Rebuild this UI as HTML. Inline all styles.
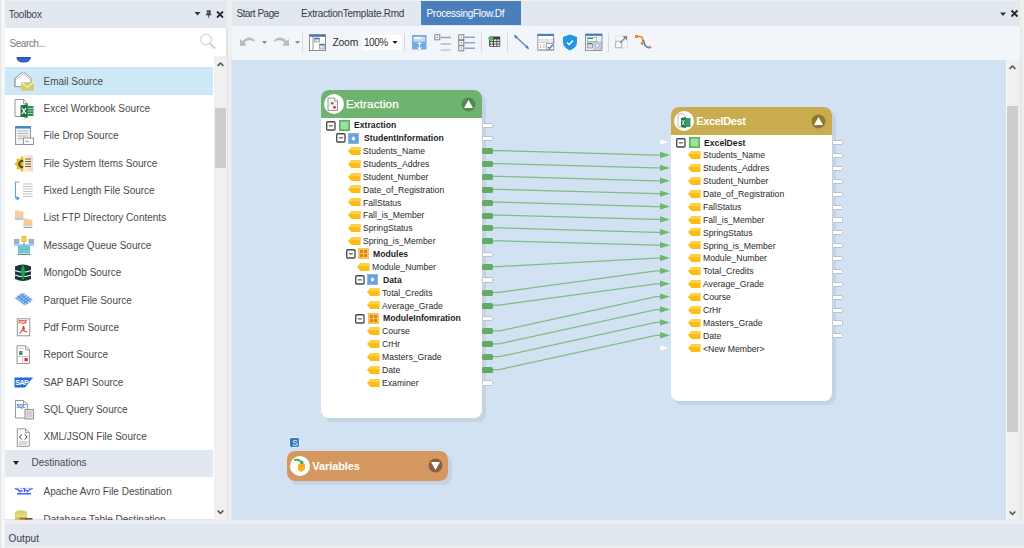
<!DOCTYPE html>
<html><head><meta charset="utf-8"><style>
*{margin:0;padding:0;box-sizing:border-box}
html,body{width:1024px;height:548px;overflow:hidden;background:#efefef;font-family:"Liberation Sans",sans-serif;position:relative}
.abs{position:absolute}
.t{position:absolute;white-space:nowrap;line-height:1}
.item{position:absolute;left:43.5px;font-size:10px;color:#4a4a4a;white-space:nowrap;line-height:1}
.ic{position:absolute;left:13.5px;width:20px;height:20px}
.row{position:absolute;font-size:9.5px;color:#2a2a2a;white-space:nowrap;line-height:1;transform:scaleX(0.91);transform-origin:0 50%}
.b{font-weight:bold;color:#1e1e1e}
</style></head><body>

<div class="abs" style="left:0;top:0;width:5px;height:548px;background:#f3f6f9;border-left:1.5px solid #e3e3e3"></div>
<div class="abs" style="left:5px;top:1px;width:222px;height:519px;background:#fff;border-right:1px solid #dde3ea;border-bottom:1px solid #e2e6ea"></div>
<div class="abs" style="left:5px;top:1px;width:221.5px;height:26.5px;background:#e1e8f0"></div>
<div class="t" style="left:8.7px;top:9.7px;font-size:10px;color:#3e3e3e;letter-spacing:-0.2px">Toolbox</div>
<svg class="abs" style="left:190px;top:6px" width="37" height="16" viewBox="0 0 37 16">
<path d="M4.5 6 L10.5 6 L7.5 9.5 Z" fill="#333"/>
<path d="M16.8 4.2 h3.8 v4 h0.8 v1 h-2.3 v2.5 h-0.9 v-2.5 h-2.3 v-1 h0.9 z" fill="#3a3a3a"/><rect x="17.6" y="4.8" width="1" height="3.2" fill="#999"/>
<path d="M27 5.5 L33 11.5 M33 5.5 L27 11.5" stroke="#2b2b2b" stroke-width="1.8"/>
</svg>
<div class="t" style="left:9.5px;top:39.3px;font-size:10px;color:#7b7b7b;letter-spacing:-0.45px">Search...</div>
<svg class="abs" style="left:198px;top:32px" width="20" height="18" viewBox="0 0 20 18">
<circle cx="8" cy="7.5" r="5.2" fill="none" stroke="#dcdcdc" stroke-width="1.5"/>
<path d="M12 11.5 L16.5 16" stroke="#d6d6d6" stroke-width="2.4" stroke-linecap="round"/>
</svg>
<div class="abs" style="left:5px;top:55px;width:209px;height:464px;overflow:hidden">
<svg class="abs" style="left:10.5px;top:0.5px" width="16" height="8" viewBox="0 0 16 8"><path d="M0.3 1 H15 Q14.5 6.5 7.6 6.5 Q0.8 6.5 0.3 1 Z" fill="#2d56b8"/><path d="M3 3.5 Q7.6 5 12 3.5" stroke="#3f7ad8" stroke-width="1.2" fill="none"/></svg>
<div class="abs" style="left:0;top:12.3px;width:208px;height:27.6px;background:#cde8f7"></div>
<div class="abs" style="left:0;top:394.8px;width:208px;height:27.6px;background:#e1e8f0"></div>
</div>
<div class="item" style="top:76.60px">Email Source</div>
<svg class="ic" style="top:71.70px" width="20" height="20" viewBox="0 0 20 20"><g transform="translate(0,-1.3)"><path d="M1 7.5 L9 1 L17 7.5 V16 H1 Z" fill="#fff" stroke="#8a8a8a" stroke-width="0.9"/><path d="M0.6 8 V16.5" stroke="#a9a9a9" stroke-width="1.6"/><path d="M2.5 8.5 L9 3.3 L15.5 8.5" fill="none" stroke="#b5b5b5" stroke-width="0.8"/><rect x="7" y="11.5" width="13" height="8.5" fill="#d3cd6e"/><path d="M7 11.5 L13.5 16.5 L20 11.5" fill="none" stroke="#f6f1c8" stroke-width="1.1"/></g></svg>
<div class="item" style="top:103.97px">Excel Workbook Source</div>
<svg class="ic" style="top:99.07px" width="20" height="20" viewBox="0 0 20 20"><path d="M1 0.5 H9.5 L13.5 4.5 V17.5 H1 Z" fill="#fff" stroke="#8a8a8a" stroke-width="0.9"/><path d="M9.5 0.5 V4.5 H13.5" fill="none" stroke="#8a8a8a" stroke-width="0.8"/><path d="M6.5 6.5 L13.5 5 V19 L6.5 17.5 Z" fill="#1f7244"/><rect x="13" y="7" width="6.5" height="10" fill="#2f8c57"/><path d="M8 9 L12 15 M12 9 L8 15" stroke="#fff" stroke-width="1.3"/><path d="M14 9.5 h5 M14 12 h5 M14 14.5 h5" stroke="#bfe0cc" stroke-width="0.8"/></svg>
<div class="item" style="top:131.34px">File Drop Source</div>
<svg class="ic" style="top:126.44px" width="20" height="20" viewBox="0 0 20 20"><rect x="1.5" y="0.5" width="15" height="18" fill="#f2f2f2" stroke="#8a8a8a" stroke-width="0.9"/><rect x="1.5" y="0.3" width="15" height="2.2" fill="#3a86d0"/><path d="M3.5 5 h11 M3.5 7.5 h11 M3.5 10 h11 M3.5 12.5 h6" stroke="#b5b5b5" stroke-width="1"/><rect x="9.5" y="12" width="10" height="6.5" fill="#fff" stroke="#8a8a8a" stroke-width="0.9"/><path d="M11.5 15.3 h3" stroke="#8a8a8a" stroke-width="1"/></svg>
<div class="item" style="top:158.71px">File System Items Source</div>
<svg class="ic" style="top:153.81px" width="20" height="20" viewBox="0 0 20 20"><circle cx="8" cy="10" r="6" fill="#f2b91c"/><path d="M8 2.5 v2 M8 15.5 v2 M0.8 10 h2 M3 5 l1.4 1.4 M3 15 l1.4 -1.4" stroke="#f2b91c" stroke-width="2.2"/><path d="M10 7.5 A3 3 0 1 0 10 12.5" fill="none" stroke="#4a4a4a" stroke-width="2"/><rect x="9.5" y="1.5" width="9.5" height="16" fill="#f7dcc0"/><rect x="9.5" y="1.5" width="4" height="16" fill="#fbf2c0"/><path d="M11 5 h6 M11 7.5 h6 M11 10 h6 M11 12.5 h6" stroke="#6d6d6d" stroke-width="1"/></svg>
<div class="item" style="top:186.08px">Fixed Length File Source</div>
<svg class="ic" style="top:181.18px" width="20" height="20" viewBox="0 0 20 20"><path d="M5.5 1 H1.5 V17 H3.5" fill="none" stroke="#5aa2e2" stroke-width="1.1"/><path d="M2.5 15 L6 17.2 L2.5 19.5 Z" fill="#4596e0"/><path d="M9 3 h9.5 M9 5.5 h9.5 M9 8 h9.5 M9 10.5 h9.5 M9 13 h9.5 M9 15.5 h9.5" stroke="#c2c2c2" stroke-width="1.1"/></svg>
<div class="item" style="top:213.45px">List FTP Directory Contents</div>
<svg class="ic" style="top:208.55px" width="20" height="20" viewBox="0 0 20 20"><path d="M1 1.5 h4 l1 1 h3.5 v6.5 h-8.5 z" fill="#fcc99a"/><path d="M1 10 h8.5" stroke="#4a9ee0" stroke-width="1"/><path d="M9.5 9.5 h4 l1 1 h3.8 v6.5 h-8.8 z" fill="#fcc99a"/><path d="M9.5 18.3 h8.8" stroke="#4a9ee0" stroke-width="1"/></svg>
<div class="item" style="top:240.82px">Message Queue Source</div>
<svg class="ic" style="top:235.92px" width="20" height="20" viewBox="0 0 20 20"><rect x="0" y="3.5" width="5" height="4" fill="#9ab5d0" stroke="#6f8fb0" stroke-width="0.5"/><rect x="15" y="3.5" width="5" height="4" fill="#9ab5d0" stroke="#6f8fb0" stroke-width="0.5"/><rect x="7.5" y="0" width="5" height="6" fill="#f6b820"/><path d="M8.5 2 h3 M8.5 4 h3" stroke="#fff" stroke-width="0.6"/><path d="M0 9 H20 M10 6 V10" stroke="#4a9ee0" stroke-width="1"/><rect x="4.5" y="10.5" width="11" height="6.5" fill="#6ccfe0" stroke="#4a9ee0" stroke-width="0.7"/><path d="M6 13.5 h8" stroke="#6bc06b" stroke-width="1.5"/><path d="M3.5 18.5 h13" stroke="#777" stroke-width="1"/></svg>
<div class="item" style="top:268.19px">MongoDb Source</div>
<svg class="ic" style="top:263.29px" width="20" height="20" viewBox="0 0 20 20"><path d="M1 3.5 Q9 -0.5 17 3.5 V16 Q9 20 1 16 Z" fill="#1b3833"/><path d="M1 7.5 Q9 11 17 7.5 M1 12 Q9 15.5 17 12" stroke="#fff" stroke-width="1.1" fill="none"/><path d="M9 1.5 Q13 8 9 18 Q5 8 9 1.5" fill="#13aa52"/></svg>
<div class="item" style="top:295.56px">Parquet File Source</div>
<svg class="ic" style="top:290.66px" width="20" height="20" viewBox="0 0 20 20"><path d="M0.5 7 L8.5 1.5 L19 8.5 L11 15 Z" fill="#a8c8f0"/><path d="M2.5 8.3 L10.5 2.8 M4.8 9.8 L12.8 4.3 M7 11.3 L15 5.8 M9.2 12.8 L17.2 7.3 M3.5 5 L14 12.8 M6 3.3 L16.5 11" stroke="#3f86e8" stroke-width="1"/></svg>
<div class="item" style="top:322.93px">Pdf Form Source</div>
<svg class="ic" style="top:318.03px" width="20" height="20" viewBox="0 0 20 20"><rect x="3.3" y="0.8" width="12.5" height="17" fill="#fff" stroke="#8a8a8a" stroke-width="0.9"/><text x="4.6" y="6.3" font-size="4.6" font-family="Liberation Sans" font-weight="bold" fill="#e0302a" letter-spacing="-0.2">PDF</text><path d="M9.5 8 L8.5 12 L5.5 15.5 M8.5 12 L13 14 M9.5 8 L10.5 11.5" fill="none" stroke="#e0302a" stroke-width="1.1"/></svg>
<div class="item" style="top:350.30px">Report Source</div>
<svg class="ic" style="top:345.40px" width="20" height="20" viewBox="0 0 20 20"><path d="M3 0.8 H11.5 L15.5 4.8 V18.5 H3 Z" fill="#fff" stroke="#8a8a8a" stroke-width="0.9"/><path d="M11.5 0.8 V4.8 H15.5" fill="none" stroke="#8a8a8a" stroke-width="0.8"/><path d="M4.5 3.5 h5" stroke="#bbb" stroke-width="0.8"/><rect x="5.2" y="6" width="3.3" height="4" fill="#3d9a52"/><path d="M3.5 11.5 h11.5 M8.5 11.5 v6" stroke="#bbb" stroke-width="0.8"/><rect x="10.5" y="13" width="3.3" height="3.3" fill="#d92b32"/></svg>
<div class="item" style="top:377.67px">SAP BAPI Source</div>
<svg class="ic" style="top:372.77px" width="20" height="20" viewBox="0 0 20 20"><path d="M0.5 4.5 H19 L11 14.5 H0.5 Z" fill="#1f6fd6"/><text x="1.2" y="11.7" font-size="7.2" font-family="Liberation Sans" font-weight="bold" fill="#fff" letter-spacing="-0.6">SAP</text></svg>
<div class="item" style="top:405.04px">SQL Query Source</div>
<svg class="ic" style="top:400.14px" width="20" height="20" viewBox="0 0 20 20"><path d="M1.5 0.5 H9.5 L13.5 4.5 V18 H1.5 Z" fill="#fff" stroke="#8a8a8a" stroke-width="0.9"/><path d="M9.5 0.5 V4.5 H13.5" fill="none" stroke="#8a8a8a" stroke-width="0.8"/><text x="2.5" y="7.5" font-size="4.6" font-family="Liberation Sans" font-weight="bold" fill="#2a70d0" letter-spacing="-0.2">SQL</text><rect x="11" y="9.5" width="8.5" height="9.5" fill="#e4e4e4" stroke="#8a8a8a" stroke-width="0.9"/><path d="M12.5 12 h5.5 M12.5 14 h5.5 M12.5 16 h5.5" stroke="#aaa" stroke-width="0.7"/></svg>
<div class="item" style="top:432.41px">XML/JSON File Source</div>
<svg class="ic" style="top:427.51px" width="20" height="20" viewBox="0 0 20 20"><path d="M3.3 0.8 H11.5 L15.3 4.6 V18.3 H3.3 Z" fill="#fff" stroke="#8a8a8a" stroke-width="0.9"/><path d="M11.5 0.8 V4.6 H15.3" fill="none" stroke="#8a8a8a" stroke-width="0.8"/><path d="M7.8 6.5 L5.5 9 L7.8 11.5 M10.8 6.5 L13.1 9 L10.8 11.5" fill="none" stroke="#333" stroke-width="1"/><path d="M5 14 h8.5 M5 16 h8.5" stroke="#b5b5b5" stroke-width="1.1"/></svg>
<svg class="abs" style="left:12px;top:460.08px" width="8" height="6" viewBox="0 0 8 6"><path d="M1 1 L7 1 L4 5 Z" fill="#1e1e1e"/></svg>
<div class="item" style="left:31.5px;top:458.48px">Destinations</div>
<div class="item" style="top:487.15px">Apache Avro File Destination</div>
<svg class="ic" style="top:482.25px" width="20" height="20" viewBox="0 0 20 20"><path d="M0.8 6.3 Q4.5 6.8 6.5 10.5 M18.8 6.3 Q15 6.8 13 10.5" fill="none" stroke="#3b5bf0" stroke-width="1.3"/><path d="M1.5 6.4 H18" stroke="#8fa0f6" stroke-width="0.7"/><path d="M6.3 9.2 Q7.5 7.5 8.5 9.5 M9.5 7.2 Q10 5.8 10.8 7.5 L10.3 10 M11.5 8.5 Q13 7.8 13.5 9.8" fill="none" stroke="#3b5bf0" stroke-width="1.3"/><path d="M3 11.8 H17" stroke="#3b5bf0" stroke-width="1.4"/></svg>
<div class="item" style="top:514.52px">Database Table Destination</div>
<svg class="ic" style="top:509.62px" width="20" height="20" viewBox="0 0 20 20"><rect x="1" y="2.5" width="12" height="10" fill="#c9cd5e"/><ellipse cx="7" cy="2.6" rx="6" ry="2.4" fill="#d2d56e" stroke="#f5e6a0" stroke-width="0.6"/><path d="M1 5.5 Q7 8 13 5.5" stroke="#f2f0c8" stroke-width="0.8" fill="none"/><rect x="5.5" y="7.6" width="5" height="2" fill="#e2622a"/><rect x="10.5" y="8" width="8" height="1.6" fill="#555"/></svg>
<div class="abs" style="left:5px;top:519.5px;width:222px;height:5px;background:#efefef"></div>
<div class="abs" style="left:214px;top:56px;width:12.5px;height:463.5px;background:#f0f0f0"></div>
<div class="abs" style="left:214.5px;top:108px;width:11.5px;height:60px;background:#cdcdcd"></div>
<div class="abs" style="left:226.5px;top:27px;width:1.5px;height:493px;background:#e0e3e6"></div>
<div class="abs" style="left:231.3px;top:60px;width:1px;height:460px;background:#e2e6ea"></div>
<svg class="abs" style="left:215px;top:60px" width="11" height="8" viewBox="0 0 11 8"><path d="M2.6 5.8 L5.5 3 L8.4 5.8" fill="none" stroke="#555" stroke-width="1.6"/></svg>
<svg class="abs" style="left:215px;top:508px" width="11" height="8" viewBox="0 0 11 8"><path d="M2.6 2.5 L5.5 5.3 L8.4 2.5" fill="none" stroke="#555" stroke-width="1.6"/></svg>
<div class="abs" style="left:231.5px;top:1px;width:788.5px;height:25px;background:#e1e8f0"></div>
<div class="abs" style="left:232px;top:26px;width:787.5px;height:34px;background:#f2f5f9"></div>
<div class="t" style="left:236.5px;top:8.5px;font-size:10px;color:#3b3b3b;letter-spacing:-0.5px">Start Page</div>
<div class="t" style="left:301px;top:8.5px;font-size:10px;color:#3b3b3b;letter-spacing:-0.27px">ExtractionTemplate.Rmd</div>
<div class="abs" style="left:421px;top:1px;width:100px;height:23.5px;background:#4a7fbb"></div>
<div class="t" style="left:426.5px;top:8.5px;font-size:10px;color:#fff;letter-spacing:-0.3px">ProcessingFlow.Df</div>
<svg class="abs" style="left:996px;top:6px" width="26" height="16" viewBox="0 0 26 16">
<path d="M4 6.5 L10 6.5 L7 10 Z" fill="#333"/>
<path d="M15.5 4.5 L21.5 10.5 M21.5 4.5 L15.5 10.5" stroke="#2b2b2b" stroke-width="1.9"/>
</svg>
<svg class="abs" style="left:239px;top:35px" width="17" height="12" viewBox="0 0 17 12">
<path d="M1 11 V4 L3.5 6 Q7 2 11 2.5 Q15 3 16.5 7 Q13 5 10 5.2 Q7 5.5 5.5 8 L8 10.5 Z" fill="#bcbcbc"/></svg>
<svg class="abs" style="left:261px;top:40px" width="7" height="5" viewBox="0 0 7 5"><path d="M1 1 H6 L3.5 4 Z" fill="#8a8a8a"/></svg>
<svg class="abs" style="left:273px;top:35px" width="17" height="12" viewBox="0 0 17 12">
<path d="M16 11 V4 L13.5 6 Q10 2 6 2.5 Q2 3 0.5 7 Q4 5 7 5.2 Q10 5.5 11.5 8 L9 10.5 Z" fill="#bcbcbc"/></svg>
<svg class="abs" style="left:294px;top:40px" width="7" height="5" viewBox="0 0 7 5"><path d="M1 1 H6 L3.5 4 Z" fill="#8a8a8a"/></svg>
<div class="abs" style="left:302px;top:33px;width:1px;height:19px;background:#d5d8dc"></div>
<svg class="abs" style="left:309px;top:34px" width="17" height="17" viewBox="0 0 17 17">
<rect x="0.5" y="0.5" width="16" height="16" fill="#fff" stroke="#8a8a8a"/><rect x="1" y="1" width="15" height="1.8" fill="#3a78c4"/>
<path d="M4 3 V16" stroke="#8a8a8a" stroke-width="0.9"/><rect x="5.5" y="4" width="5" height="4" fill="#ddd" stroke="#888" stroke-width="0.6"/><rect x="5.5" y="4" width="5" height="1.3" fill="#3a78c4"/>
<rect x="10.5" y="10" width="5" height="5" fill="#ddd" stroke="#888" stroke-width="0.6"/><rect x="10.5" y="10" width="5" height="1.3" fill="#3a78c4"/></svg>
<div class="t" style="left:332.5px;top:38px;font-size:10.3px;color:#2e2e2e;letter-spacing:-0.2px">Zoom</div>
<div class="abs" style="left:362px;top:35px;width:39px;height:14.5px;background:#fff"></div>
<div class="t" style="left:364px;top:37.5px;font-size:10px;color:#2e2e2e;letter-spacing:-0.45px">100%</div>
<svg class="abs" style="left:391px;top:40px" width="8" height="5" viewBox="0 0 8 5"><path d="M1.5 1 H6.5 L4 4 Z" fill="#1a1a1a"/></svg>
<div class="abs" style="left:404px;top:33px;width:1px;height:19px;background:#d5d8dc"></div>
<svg class="abs" style="left:411.5px;top:34.6px" width="15" height="16" viewBox="0 0 15 16">
<rect x="0" y="0" width="14.5" height="14.6" rx="0.6" fill="#76aade"/><rect x="1.5" y="1.8" width="11.5" height="4.8" fill="#c4dcf2"/><rect x="1.8" y="2.3" width="8" height="1.4" fill="#fff"/>
<path d="M7.5 7.5 V14" stroke="#fff" stroke-width="1"/><path d="M5.5 9 L7.5 7 L9.5 9 M5.5 12.5 L7.5 14.5 L9.5 12.5" fill="#fff" stroke="#fff" stroke-width="0.8"/></svg>
<svg class="abs" style="left:434px;top:33.7px" width="18" height="18" viewBox="0 0 18 18">
<rect x="0.8" y="0.8" width="5" height="5" fill="#fff" stroke="#777" stroke-width="0.9"/><path d="M2.3 3.3 h2" stroke="#3a78c4" stroke-width="0.9"/>
<path d="M6.5 3.5 H17" stroke="#8aa9cc" stroke-width="1.5"/><path d="M6.5 10 H17" stroke="#aaa" stroke-width="1.2"/><path d="M6.5 16 H17" stroke="#bbb" stroke-width="1.2"/></svg>
<svg class="abs" style="left:458px;top:33.7px" width="18" height="18" viewBox="0 0 18 18">
<rect x="0.8" y="0.8" width="5" height="5" fill="#fff" stroke="#777" stroke-width="0.9"/><rect x="0.8" y="6.3" width="5" height="5" fill="#fff" stroke="#777" stroke-width="0.9"/><rect x="0.8" y="11.8" width="5" height="5" fill="#fff" stroke="#777" stroke-width="0.9"/>
<path d="M3.3 2.3 v2 M3.3 7.8 v2 M3.3 13.3 v2" stroke="#3a78c4" stroke-width="0.8"/>
<path d="M6.5 3.3 H17 M6.5 8.8 H17 M6.5 14.3 H17" stroke="#8aa9cc" stroke-width="1.5"/></svg>
<div class="abs" style="left:481px;top:33px;width:1px;height:19px;background:#d5d8dc"></div>
<svg class="abs" style="left:487px;top:35px" width="14" height="13" viewBox="0 0 14 13">
<rect x="2.2" y="1.6" width="11" height="10.2" rx="0.8" fill="#3c3c3c"/>
<rect x="3.3" y="4.4" width="2.6" height="1.8" fill="#f2f2f2"/><rect x="6.9" y="4.4" width="2.6" height="1.8" fill="#f2f2f2"/><rect x="10.3" y="4.4" width="2.2" height="1.8" fill="#f2f2f2"/>
<rect x="3.3" y="7.1" width="2.6" height="1.6" fill="#f2f2f2"/><rect x="6.9" y="7.1" width="2.6" height="1.6" fill="#f2f2f2"/><rect x="10.3" y="7.1" width="2.2" height="1.6" fill="#f2f2f2"/>
<rect x="3.3" y="9.5" width="2.6" height="1.5" fill="#f2f2f2"/><rect x="6.9" y="9.5" width="2.6" height="1.5" fill="#f2f2f2"/><rect x="10.3" y="9.5" width="2.2" height="1.5" fill="#f2f2f2"/>
<path d="M0.8 3.6 L3.8 0.6 L6.8 3.6 L3.8 6.6 Z" fill="#5cb85c"/></svg>
<div class="abs" style="left:506.5px;top:33px;width:1px;height:19px;background:#d5d8dc"></div>
<svg class="abs" style="left:513px;top:34px" width="17" height="16" viewBox="0 0 17 16">
<path d="M2 2 L15 14" stroke="#4b80c2" stroke-width="1.2"/><path d="M0.8 0.5 L4.8 2.5 L2.5 4.8 Z M16.2 15.5 L12.2 13.5 L14.5 11.2 Z" fill="#4b80c2"/></svg>
<svg class="abs" style="left:537px;top:33px" width="18" height="18" viewBox="0 0 18 18">
<rect x="0.8" y="1.3" width="15.8" height="16" fill="#fff" stroke="#9a9a9a" stroke-width="1"/><rect x="0.5" y="1" width="16.4" height="2" fill="#4a80c0"/><rect x="0.5" y="16.2" width="16.4" height="1.3" fill="#b5b5b5"/>
<text x="2" y="9.5" font-size="5.2" font-family="Liberation Sans" fill="#aaa" letter-spacing="-0.3">0101 01</text><text x="2" y="14.8" font-size="5.2" font-family="Liberation Sans" fill="#aaa" letter-spacing="0.5">10</text>
<rect x="9.5" y="10.5" width="7" height="6" fill="#fff" stroke="#999" stroke-width="0.8"/><path d="M10.8 14 L12.5 15.5 L16 11.8" fill="none" stroke="#4a80c0" stroke-width="1.3"/></svg>
<svg class="abs" style="left:562px;top:34px" width="16" height="17" viewBox="0 0 16 17">
<path d="M8 0.5 L15 3 V8 Q15 13.5 8 16.5 Q1 13.5 1 8 V3 Z" fill="#2196e8"/><path d="M5 8.5 L7.2 10.5 L11 6.5" fill="none" stroke="#fff" stroke-width="1.4"/></svg>
<svg class="abs" style="left:585px;top:33px" width="18" height="18" viewBox="0 0 18 18">
<rect x="0.5" y="1" width="16.5" height="16.5" fill="#f4f4f4" stroke="#888" stroke-width="0.9"/><rect x="0.5" y="1" width="16.5" height="1.8" fill="#3a78c4"/>
<rect x="2.5" y="4.5" width="9" height="4" fill="#fff" stroke="#6ab46a" stroke-width="0.7"/><rect x="3" y="5" width="5" height="1" fill="#3a78c4"/>
<rect x="2.5" y="10" width="5" height="5" fill="#ddd" stroke="#777" stroke-width="0.6"/><rect x="2.5" y="10" width="5" height="1.2" fill="#3a78c4"/>
<rect x="9" y="9" width="7" height="7" fill="#e6eef8" stroke="#888" stroke-width="0.6"/><circle cx="12.5" cy="12.5" r="2.2" fill="none" stroke="#6d9fd8" stroke-width="0.8"/></svg>
<div class="abs" style="left:608px;top:33px;width:1px;height:19px;background:#d5d8dc"></div>
<svg class="abs" style="left:615px;top:35px" width="14" height="14" viewBox="0 0 14 14">
<rect x="0.7" y="6.3" width="6" height="6.5" fill="#fff" stroke="#aaa" stroke-width="1"/><path d="M0.7 6.3 V1 H12.5 V12.8 H6.7" fill="none" stroke="#ddd" stroke-width="0.8"/>
<path d="M5 8 L11.5 1.5" stroke="#888" stroke-width="1.2"/><path d="M7.5 1 H12 V5.5 Z" fill="#888"/></svg>
<svg class="abs" style="left:635px;top:35px" width="17" height="14" viewBox="0 0 17 14">
<path d="M0.5 1.5 H4 Q8 1.5 8 5 Q8 8 6.5 9" fill="none" stroke="#f28a1c" stroke-width="1.6"/><path d="M8.5 5 Q9 11 13 12.5 H15" fill="none" stroke="#3a7fd0" stroke-width="1.6"/>
<path d="M5 8 L9 6.5 L7.5 10.5 Z" fill="#f28a1c"/><path d="M14 10 L17 12.5 L14 14 Z" fill="#f28a1c"/><rect x="0" y="0" width="3" height="3" fill="#f28a1c"/></svg>
<div class="abs" style="left:232px;top:60px;width:774px;height:460px;background:#d3e2f2"></div>
<div class="abs" style="left:1006px;top:60px;width:13px;height:460px;background:#f0f0f0;border-left:1px solid #f8f8f8"></div>
<div class="abs" style="left:1007px;top:106px;width:11px;height:326px;background:#cdcdcd"></div>
<svg class="abs" style="left:1007px;top:63px" width="11" height="8" viewBox="0 0 11 8"><path d="M2.6 5.8 L5.5 3 L8.4 5.8" fill="none" stroke="#555" stroke-width="1.6"/></svg>
<svg class="abs" style="left:1007px;top:509px" width="11" height="8" viewBox="0 0 11 8"><path d="M2.6 2.5 L5.5 5.3 L8.4 2.5" fill="none" stroke="#555" stroke-width="1.6"/></svg>
<div class="abs" style="left:1020px;top:26px;width:2px;height:494px;background:#e6e8eb"></div>
<div class="abs" style="left:1019.5px;top:60px;width:1px;height:460px;background:#e3e6e9"></div>
<div class="abs" style="left:5px;top:524px;width:1019px;height:23px;background:#e1e8f0"></div>
<div class="t" style="left:8.5px;top:533.5px;font-size:10px;color:#3b3b3b;letter-spacing:0.1px">Output</div>
<div class="abs" style="left:324.7px;top:93.7px;width:161px;height:328px;border-radius:8px;background:#c5d4e4"></div>
<div class="abs" style="left:321px;top:90px;width:161px;height:328px;border-radius:8px;background:#fff;overflow:hidden"><div class="abs" style="left:0;top:0;width:161px;height:28.3px;background:#6fb371"></div></div>
<div class="abs" style="left:674.2px;top:110.7px;width:161.5px;height:294px;border-radius:8px;background:#c5d4e4"></div>
<div class="abs" style="left:670.5px;top:107px;width:161.5px;height:294px;border-radius:8px;background:#fff;overflow:hidden"><div class="abs" style="left:0;top:0;width:161.5px;height:27.5px;background:#c8ac4f"></div></div>
<div class="abs" style="left:290.2px;top:455.0px;width:161.5px;height:29.7px;border-radius:8px;background:#c5d4e4"></div>
<div class="abs" style="left:286.5px;top:451.3px;width:161.5px;height:29.7px;border-radius:8px;background:#fff;overflow:hidden"><div class="abs" style="left:0;top:0;width:161.5px;height:29.7px;background:#d69861"></div></div>
<svg class="abs" style="left:0;top:0" width="1024" height="548" viewBox="0 0 1024 548">
<path d="M492.5 150.65 L499.5 150.65 L656 155.03 L661 155.03 M492.5 163.53 L499.5 163.53 L656 167.90 L661 167.90 M492.5 176.40 L499.5 176.40 L656 180.78 L661 180.78 M492.5 189.28 L499.5 189.28 L656 193.65 L661 193.65 M492.5 202.15 L499.5 202.15 L656 206.53 L661 206.53 M492.5 215.03 L499.5 215.03 L656 219.40 L661 219.40 M492.5 227.90 L499.5 227.90 L656 232.28 L661 232.28 M492.5 240.78 L499.5 240.78 L656 245.15 L661 245.15 M492.5 266.52 L499.5 266.52 L656 258.02 L661 258.02 M492.5 292.27 L499.5 292.27 L656 270.90 L661 270.90 M492.5 305.15 L499.5 305.15 L656 283.77 L661 283.77 M492.5 330.90 L499.5 330.90 L656 296.65 L661 296.65 M492.5 343.77 L499.5 343.77 L656 309.52 L661 309.52 M492.5 356.65 L499.5 356.65 L656 322.40 L661 322.40 M492.5 369.52 L499.5 369.52 L656 335.27 L661 335.27" fill="none" stroke="#80bd84" stroke-width="1.25" stroke-linejoin="round"/>
<path d="M660 151.83 L670 155.03 L660 158.22 Z M660 164.70 L670 167.90 L660 171.10 Z M660 177.58 L670 180.78 L660 183.97 Z M660 190.45 L670 193.65 L660 196.85 Z M660 203.33 L670 206.53 L660 209.72 Z M660 216.20 L670 219.40 L660 222.60 Z M660 229.08 L670 232.28 L660 235.47 Z M660 241.95 L670 245.15 L660 248.35 Z M660 254.82 L670 258.02 L660 261.22 Z M660 267.70 L670 270.90 L660 274.10 Z M660 280.57 L670 283.77 L660 286.97 Z M660 293.45 L670 296.65 L660 299.85 Z M660 306.32 L670 309.52 L660 312.72 Z M660 319.20 L670 322.40 L660 325.60 Z M660 332.07 L670 335.27 L660 338.47 Z" fill="#6cb86e"/>
<path d="M660 139.35 L670 142.15 L660 144.95 Z" fill="#fff" stroke="#d7dde4" stroke-width="0.6"/>
<path d="M660 345.35 L670 348.15 L660 350.95 Z" fill="#fff" stroke="#d7dde4" stroke-width="0.6"/>
</svg>
<div class="abs" style="left:324px;top:94px;width:20px;height:20px;border-radius:50%;background:#fff"></div>
<svg class="abs" style="left:327px;top:97px" width="12" height="15" viewBox="0 0 12 15"><path d="M1 1 H7.5 L10.5 4 V13.5 H1 Z" fill="#f4f4f4" stroke="#9a9a9a" stroke-width="1"/><path d="M7.5 1 V4 H10.5" fill="#ddd" stroke="#9a9a9a" stroke-width="0.8"/><circle cx="5.2" cy="6.3" r="1.3" fill="#2f8a6a"/><circle cx="7.5" cy="10.3" r="1.4" fill="#d9342b"/><path d="M1.5 8.3 H10" stroke="#ddd" stroke-width="0.6"/></svg>
<div class="t" style="left:346px;top:98.2px;color:#fff;font-size:11.6px;letter-spacing:0.12px;-webkit-text-stroke:0.25px #fff">Extraction</div>
<svg class="abs" style="left:461px;top:97px" width="15" height="15" viewBox="0 0 15 15"><circle cx="7.5" cy="7.5" r="7" fill="#4f8b51"/><path d="M3 11 L7.5 3 L12 11 Z" fill="#fff"/></svg>
<svg class="abs" style="left:326.20px;top:120.60px" width="10" height="10" viewBox="0 0 10 10"><rect x="0.7" y="0.7" width="8.3" height="8.3" rx="1" fill="#fff" stroke="#4a4a4a" stroke-width="1.35"/><path d="M2.9 4.85 H6.8" stroke="#555" stroke-width="1.2"/></svg>
<svg class="abs" style="left:338.50px;top:119.60px" width="11" height="11" viewBox="0 0 11 11"><rect x="0.8" y="0.8" width="9.4" height="9.4" fill="#9de09d" stroke="#58b35a" stroke-width="1.6"/></svg>
<div class="row b" style="left:354.00px;top:120.30px">Extraction</div>
<div class="abs" style="left:482.00px;top:122.90px;width:10.5px;height:5.2px;background:#fff;border:1px solid #bcc2c9;border-radius:1.5px"></div>
<svg class="abs" style="left:335.90px;top:133.47px" width="10" height="10" viewBox="0 0 10 10"><rect x="0.7" y="0.7" width="8.3" height="8.3" rx="1" fill="#fff" stroke="#4a4a4a" stroke-width="1.35"/><path d="M2.9 4.85 H6.8" stroke="#555" stroke-width="1.2"/></svg>
<svg class="abs" style="left:347.60px;top:132.58px" width="11" height="11" viewBox="0 0 11 11"><rect x="0" y="0" width="11" height="11" fill="#6aa0dc"/><rect x="0.6" y="0.6" width="9.8" height="9.8" fill="none" stroke="#8fbaea" stroke-width="0.8"/><path d="M5.5 3.3 L7.6 5.6 L5.5 7.9 L3.4 5.6 Z" fill="#fff"/></svg>
<div class="row b" style="left:363.70px;top:133.18px">StudentInformation</div>
<div class="abs" style="left:482.00px;top:135.78px;width:10.5px;height:5.2px;background:#fff;border:1px solid #bcc2c9;border-radius:1.5px"></div>
<svg class="abs" style="left:347.50px;top:146.85px" width="13" height="8" viewBox="0 0 13 8"><path d="M0 4 L3.5 0 H12.5 V8 H3.5 Z" fill="#fbbd12"/><path d="M1.7 2 L3.5 0 H12.5 V3.2 H1 Z" fill="#ffd04a"/></svg>
<div class="row" style="left:362.70px;top:146.05px">Students_Name</div>
<div class="abs" style="left:482.00px;top:148.15px;width:10.5px;height:6px;background:#62ab64;border-radius:1.5px"></div>
<svg class="abs" style="left:347.50px;top:159.72px" width="13" height="8" viewBox="0 0 13 8"><path d="M0 4 L3.5 0 H12.5 V8 H3.5 Z" fill="#fbbd12"/><path d="M1.7 2 L3.5 0 H12.5 V3.2 H1 Z" fill="#ffd04a"/></svg>
<div class="row" style="left:362.70px;top:158.93px">Students_Addres</div>
<div class="abs" style="left:482.00px;top:161.03px;width:10.5px;height:6px;background:#62ab64;border-radius:1.5px"></div>
<svg class="abs" style="left:347.50px;top:172.60px" width="13" height="8" viewBox="0 0 13 8"><path d="M0 4 L3.5 0 H12.5 V8 H3.5 Z" fill="#fbbd12"/><path d="M1.7 2 L3.5 0 H12.5 V3.2 H1 Z" fill="#ffd04a"/></svg>
<div class="row" style="left:362.70px;top:171.80px">Student_Number</div>
<div class="abs" style="left:482.00px;top:173.90px;width:10.5px;height:6px;background:#62ab64;border-radius:1.5px"></div>
<svg class="abs" style="left:347.50px;top:185.47px" width="13" height="8" viewBox="0 0 13 8"><path d="M0 4 L3.5 0 H12.5 V8 H3.5 Z" fill="#fbbd12"/><path d="M1.7 2 L3.5 0 H12.5 V3.2 H1 Z" fill="#ffd04a"/></svg>
<div class="row" style="left:362.70px;top:184.68px">Date_of_Registration</div>
<div class="abs" style="left:482.00px;top:186.78px;width:10.5px;height:6px;background:#62ab64;border-radius:1.5px"></div>
<svg class="abs" style="left:347.50px;top:198.35px" width="13" height="8" viewBox="0 0 13 8"><path d="M0 4 L3.5 0 H12.5 V8 H3.5 Z" fill="#fbbd12"/><path d="M1.7 2 L3.5 0 H12.5 V3.2 H1 Z" fill="#ffd04a"/></svg>
<div class="row" style="left:362.70px;top:197.55px">FallStatus</div>
<div class="abs" style="left:482.00px;top:199.65px;width:10.5px;height:6px;background:#62ab64;border-radius:1.5px"></div>
<svg class="abs" style="left:347.50px;top:211.22px" width="13" height="8" viewBox="0 0 13 8"><path d="M0 4 L3.5 0 H12.5 V8 H3.5 Z" fill="#fbbd12"/><path d="M1.7 2 L3.5 0 H12.5 V3.2 H1 Z" fill="#ffd04a"/></svg>
<div class="row" style="left:362.70px;top:210.43px">Fall_is_Member</div>
<div class="abs" style="left:482.00px;top:212.53px;width:10.5px;height:6px;background:#62ab64;border-radius:1.5px"></div>
<svg class="abs" style="left:347.50px;top:224.10px" width="13" height="8" viewBox="0 0 13 8"><path d="M0 4 L3.5 0 H12.5 V8 H3.5 Z" fill="#fbbd12"/><path d="M1.7 2 L3.5 0 H12.5 V3.2 H1 Z" fill="#ffd04a"/></svg>
<div class="row" style="left:362.70px;top:223.30px">SpringStatus</div>
<div class="abs" style="left:482.00px;top:225.40px;width:10.5px;height:6px;background:#62ab64;border-radius:1.5px"></div>
<svg class="abs" style="left:347.50px;top:236.97px" width="13" height="8" viewBox="0 0 13 8"><path d="M0 4 L3.5 0 H12.5 V8 H3.5 Z" fill="#fbbd12"/><path d="M1.7 2 L3.5 0 H12.5 V3.2 H1 Z" fill="#ffd04a"/></svg>
<div class="row" style="left:362.70px;top:236.18px">Spring_is_Member</div>
<div class="abs" style="left:482.00px;top:238.28px;width:10.5px;height:6px;background:#62ab64;border-radius:1.5px"></div>
<svg class="abs" style="left:345.60px;top:249.35px" width="10" height="10" viewBox="0 0 10 10"><rect x="0.7" y="0.7" width="8.3" height="8.3" rx="1" fill="#fff" stroke="#4a4a4a" stroke-width="1.35"/><path d="M2.9 4.85 H6.8" stroke="#555" stroke-width="1.2"/></svg>
<svg class="abs" style="left:358.20px;top:248.15px" width="11" height="11" viewBox="0 0 11 11"><rect x="0" y="0" width="11" height="11" fill="#f8c15a"/><rect x="2" y="2" width="3" height="3" fill="#d98a14"/><rect x="6" y="2" width="3" height="3" fill="#d98a14"/><rect x="2" y="6" width="3" height="3" fill="#d98a14"/><rect x="6" y="6" width="3" height="3" fill="#d98a14"/></svg>
<div class="row b" style="left:373.40px;top:249.05px">Modules</div>
<div class="abs" style="left:482.00px;top:251.65px;width:10.5px;height:5.2px;background:#fff;border:1px solid #bcc2c9;border-radius:1.5px"></div>
<svg class="abs" style="left:357.20px;top:262.72px" width="13" height="8" viewBox="0 0 13 8"><path d="M0 4 L3.5 0 H12.5 V8 H3.5 Z" fill="#fbbd12"/><path d="M1.7 2 L3.5 0 H12.5 V3.2 H1 Z" fill="#ffd04a"/></svg>
<div class="row" style="left:372.40px;top:261.92px">Module_Number</div>
<div class="abs" style="left:482.00px;top:264.02px;width:10.5px;height:6px;background:#62ab64;border-radius:1.5px"></div>
<svg class="abs" style="left:355.30px;top:275.10px" width="10" height="10" viewBox="0 0 10 10"><rect x="0.7" y="0.7" width="8.3" height="8.3" rx="1" fill="#fff" stroke="#4a4a4a" stroke-width="1.35"/><path d="M2.9 4.85 H6.8" stroke="#555" stroke-width="1.2"/></svg>
<svg class="abs" style="left:367.00px;top:274.20px" width="11" height="11" viewBox="0 0 11 11"><rect x="0" y="0" width="11" height="11" fill="#6aa0dc"/><rect x="0.6" y="0.6" width="9.8" height="9.8" fill="none" stroke="#8fbaea" stroke-width="0.8"/><path d="M5.5 3.3 L7.6 5.6 L5.5 7.9 L3.4 5.6 Z" fill="#fff"/></svg>
<div class="row b" style="left:383.10px;top:274.80px">Data</div>
<div class="abs" style="left:482.00px;top:277.40px;width:10.5px;height:5.2px;background:#fff;border:1px solid #bcc2c9;border-radius:1.5px"></div>
<svg class="abs" style="left:366.90px;top:288.47px" width="13" height="8" viewBox="0 0 13 8"><path d="M0 4 L3.5 0 H12.5 V8 H3.5 Z" fill="#fbbd12"/><path d="M1.7 2 L3.5 0 H12.5 V3.2 H1 Z" fill="#ffd04a"/></svg>
<div class="row" style="left:382.10px;top:287.67px">Total_Credits</div>
<div class="abs" style="left:482.00px;top:289.77px;width:10.5px;height:6px;background:#62ab64;border-radius:1.5px"></div>
<svg class="abs" style="left:366.90px;top:301.35px" width="13" height="8" viewBox="0 0 13 8"><path d="M0 4 L3.5 0 H12.5 V8 H3.5 Z" fill="#fbbd12"/><path d="M1.7 2 L3.5 0 H12.5 V3.2 H1 Z" fill="#ffd04a"/></svg>
<div class="row" style="left:382.10px;top:300.55px">Average_Grade</div>
<div class="abs" style="left:482.00px;top:302.65px;width:10.5px;height:6px;background:#62ab64;border-radius:1.5px"></div>
<svg class="abs" style="left:355.30px;top:313.72px" width="10" height="10" viewBox="0 0 10 10"><rect x="0.7" y="0.7" width="8.3" height="8.3" rx="1" fill="#fff" stroke="#4a4a4a" stroke-width="1.35"/><path d="M2.9 4.85 H6.8" stroke="#555" stroke-width="1.2"/></svg>
<svg class="abs" style="left:367.90px;top:312.52px" width="11" height="11" viewBox="0 0 11 11"><rect x="0" y="0" width="11" height="11" fill="#f8c15a"/><rect x="2" y="2" width="3" height="3" fill="#d98a14"/><rect x="6" y="2" width="3" height="3" fill="#d98a14"/><rect x="2" y="6" width="3" height="3" fill="#d98a14"/><rect x="6" y="6" width="3" height="3" fill="#d98a14"/></svg>
<div class="row b" style="left:383.10px;top:313.42px">ModuleInfomration</div>
<div class="abs" style="left:482.00px;top:316.02px;width:10.5px;height:5.2px;background:#fff;border:1px solid #bcc2c9;border-radius:1.5px"></div>
<svg class="abs" style="left:366.90px;top:327.10px" width="13" height="8" viewBox="0 0 13 8"><path d="M0 4 L3.5 0 H12.5 V8 H3.5 Z" fill="#fbbd12"/><path d="M1.7 2 L3.5 0 H12.5 V3.2 H1 Z" fill="#ffd04a"/></svg>
<div class="row" style="left:382.10px;top:326.30px">Course</div>
<div class="abs" style="left:482.00px;top:328.40px;width:10.5px;height:6px;background:#62ab64;border-radius:1.5px"></div>
<svg class="abs" style="left:366.90px;top:339.97px" width="13" height="8" viewBox="0 0 13 8"><path d="M0 4 L3.5 0 H12.5 V8 H3.5 Z" fill="#fbbd12"/><path d="M1.7 2 L3.5 0 H12.5 V3.2 H1 Z" fill="#ffd04a"/></svg>
<div class="row" style="left:382.10px;top:339.17px">CrHr</div>
<div class="abs" style="left:482.00px;top:341.27px;width:10.5px;height:6px;background:#62ab64;border-radius:1.5px"></div>
<svg class="abs" style="left:366.90px;top:352.85px" width="13" height="8" viewBox="0 0 13 8"><path d="M0 4 L3.5 0 H12.5 V8 H3.5 Z" fill="#fbbd12"/><path d="M1.7 2 L3.5 0 H12.5 V3.2 H1 Z" fill="#ffd04a"/></svg>
<div class="row" style="left:382.10px;top:352.05px">Masters_Grade</div>
<div class="abs" style="left:482.00px;top:354.15px;width:10.5px;height:6px;background:#62ab64;border-radius:1.5px"></div>
<svg class="abs" style="left:366.90px;top:365.72px" width="13" height="8" viewBox="0 0 13 8"><path d="M0 4 L3.5 0 H12.5 V8 H3.5 Z" fill="#fbbd12"/><path d="M1.7 2 L3.5 0 H12.5 V3.2 H1 Z" fill="#ffd04a"/></svg>
<div class="row" style="left:382.10px;top:364.92px">Date</div>
<div class="abs" style="left:482.00px;top:367.02px;width:10.5px;height:6px;background:#62ab64;border-radius:1.5px"></div>
<svg class="abs" style="left:366.90px;top:378.60px" width="13" height="8" viewBox="0 0 13 8"><path d="M0 4 L3.5 0 H12.5 V8 H3.5 Z" fill="#fbbd12"/><path d="M1.7 2 L3.5 0 H12.5 V3.2 H1 Z" fill="#ffd04a"/></svg>
<div class="row" style="left:382.10px;top:377.80px">Examiner</div>
<div class="abs" style="left:482.00px;top:380.40px;width:10.5px;height:5.2px;background:#fff;border:1px solid #bcc2c9;border-radius:1.5px"></div>
<div class="abs" style="left:673.6px;top:110.8px;width:20px;height:20px;border-radius:50%;background:#fff"></div>
<svg class="abs" style="left:676px;top:113px" width="16" height="16" viewBox="0 0 16 16"><path d="M2 1 H7 L9.5 3.5 V14 H2 Z" fill="#fff" stroke="#aaa" stroke-width="0.8"/><path d="M5 5 L10 4 V15 L5 14 Z" fill="#1f7a45"/><rect x="9.5" y="5" width="5" height="9" fill="#3a9a62"/><path d="M6 7 L8.5 12 M8.5 7 L6 12" stroke="#fff" stroke-width="0.8"/></svg>
<div class="t" style="left:696.3px;top:115.8px;color:#fff;font-size:11px;font-weight:bold;letter-spacing:-0.36px">ExcelDest</div>
<svg class="abs" style="left:811px;top:114px" width="15" height="15" viewBox="0 0 15 15"><circle cx="7.5" cy="7.5" r="7" fill="#8f7834"/><path d="M3 11 L7.5 3 L12 11 Z" fill="#fff"/></svg>
<svg class="abs" style="left:676.20px;top:137.85px" width="10" height="10" viewBox="0 0 10 10"><rect x="0.7" y="0.7" width="8.3" height="8.3" rx="1" fill="#fff" stroke="#4a4a4a" stroke-width="1.35"/><path d="M2.9 4.85 H6.8" stroke="#555" stroke-width="1.2"/></svg>
<svg class="abs" style="left:688.50px;top:136.85px" width="11" height="11" viewBox="0 0 11 11"><rect x="0.8" y="0.8" width="9.4" height="9.4" fill="#9de09d" stroke="#58b35a" stroke-width="1.6"/></svg>
<div class="row b" style="left:703.80px;top:137.55px">ExcelDest</div>
<div class="abs" style="left:832.00px;top:140.15px;width:10.5px;height:5.2px;background:#fff;border:1px solid #bcc2c9;border-radius:1.5px"></div>
<svg class="abs" style="left:687.50px;top:151.22px" width="13" height="8" viewBox="0 0 13 8"><path d="M0 4 L3.5 0 H12.5 V8 H3.5 Z" fill="#fbbd12"/><path d="M1.7 2 L3.5 0 H12.5 V3.2 H1 Z" fill="#ffd04a"/></svg>
<div class="row" style="left:702.70px;top:150.43px">Students_Name</div>
<div class="abs" style="left:832.00px;top:153.03px;width:10.5px;height:5.2px;background:#fff;border:1px solid #bcc2c9;border-radius:1.5px"></div>
<svg class="abs" style="left:687.50px;top:164.10px" width="13" height="8" viewBox="0 0 13 8"><path d="M0 4 L3.5 0 H12.5 V8 H3.5 Z" fill="#fbbd12"/><path d="M1.7 2 L3.5 0 H12.5 V3.2 H1 Z" fill="#ffd04a"/></svg>
<div class="row" style="left:702.70px;top:163.30px">Students_Addres</div>
<div class="abs" style="left:832.00px;top:165.90px;width:10.5px;height:5.2px;background:#fff;border:1px solid #bcc2c9;border-radius:1.5px"></div>
<svg class="abs" style="left:687.50px;top:176.97px" width="13" height="8" viewBox="0 0 13 8"><path d="M0 4 L3.5 0 H12.5 V8 H3.5 Z" fill="#fbbd12"/><path d="M1.7 2 L3.5 0 H12.5 V3.2 H1 Z" fill="#ffd04a"/></svg>
<div class="row" style="left:702.70px;top:176.18px">Student_Number</div>
<div class="abs" style="left:832.00px;top:178.78px;width:10.5px;height:5.2px;background:#fff;border:1px solid #bcc2c9;border-radius:1.5px"></div>
<svg class="abs" style="left:687.50px;top:189.85px" width="13" height="8" viewBox="0 0 13 8"><path d="M0 4 L3.5 0 H12.5 V8 H3.5 Z" fill="#fbbd12"/><path d="M1.7 2 L3.5 0 H12.5 V3.2 H1 Z" fill="#ffd04a"/></svg>
<div class="row" style="left:702.70px;top:189.05px">Date_of_Registration</div>
<div class="abs" style="left:832.00px;top:191.65px;width:10.5px;height:5.2px;background:#fff;border:1px solid #bcc2c9;border-radius:1.5px"></div>
<svg class="abs" style="left:687.50px;top:202.72px" width="13" height="8" viewBox="0 0 13 8"><path d="M0 4 L3.5 0 H12.5 V8 H3.5 Z" fill="#fbbd12"/><path d="M1.7 2 L3.5 0 H12.5 V3.2 H1 Z" fill="#ffd04a"/></svg>
<div class="row" style="left:702.70px;top:201.93px">FallStatus</div>
<div class="abs" style="left:832.00px;top:204.53px;width:10.5px;height:5.2px;background:#fff;border:1px solid #bcc2c9;border-radius:1.5px"></div>
<svg class="abs" style="left:687.50px;top:215.60px" width="13" height="8" viewBox="0 0 13 8"><path d="M0 4 L3.5 0 H12.5 V8 H3.5 Z" fill="#fbbd12"/><path d="M1.7 2 L3.5 0 H12.5 V3.2 H1 Z" fill="#ffd04a"/></svg>
<div class="row" style="left:702.70px;top:214.80px">Fall_is_Member</div>
<div class="abs" style="left:832.00px;top:217.40px;width:10.5px;height:5.2px;background:#fff;border:1px solid #bcc2c9;border-radius:1.5px"></div>
<svg class="abs" style="left:687.50px;top:228.47px" width="13" height="8" viewBox="0 0 13 8"><path d="M0 4 L3.5 0 H12.5 V8 H3.5 Z" fill="#fbbd12"/><path d="M1.7 2 L3.5 0 H12.5 V3.2 H1 Z" fill="#ffd04a"/></svg>
<div class="row" style="left:702.70px;top:227.68px">SpringStatus</div>
<div class="abs" style="left:832.00px;top:230.28px;width:10.5px;height:5.2px;background:#fff;border:1px solid #bcc2c9;border-radius:1.5px"></div>
<svg class="abs" style="left:687.50px;top:241.35px" width="13" height="8" viewBox="0 0 13 8"><path d="M0 4 L3.5 0 H12.5 V8 H3.5 Z" fill="#fbbd12"/><path d="M1.7 2 L3.5 0 H12.5 V3.2 H1 Z" fill="#ffd04a"/></svg>
<div class="row" style="left:702.70px;top:240.55px">Spring_is_Member</div>
<div class="abs" style="left:832.00px;top:243.15px;width:10.5px;height:5.2px;background:#fff;border:1px solid #bcc2c9;border-radius:1.5px"></div>
<svg class="abs" style="left:687.50px;top:254.22px" width="13" height="8" viewBox="0 0 13 8"><path d="M0 4 L3.5 0 H12.5 V8 H3.5 Z" fill="#fbbd12"/><path d="M1.7 2 L3.5 0 H12.5 V3.2 H1 Z" fill="#ffd04a"/></svg>
<div class="row" style="left:702.70px;top:253.42px">Module_Number</div>
<div class="abs" style="left:832.00px;top:256.02px;width:10.5px;height:5.2px;background:#fff;border:1px solid #bcc2c9;border-radius:1.5px"></div>
<svg class="abs" style="left:687.50px;top:267.10px" width="13" height="8" viewBox="0 0 13 8"><path d="M0 4 L3.5 0 H12.5 V8 H3.5 Z" fill="#fbbd12"/><path d="M1.7 2 L3.5 0 H12.5 V3.2 H1 Z" fill="#ffd04a"/></svg>
<div class="row" style="left:702.70px;top:266.30px">Total_Credits</div>
<div class="abs" style="left:832.00px;top:268.90px;width:10.5px;height:5.2px;background:#fff;border:1px solid #bcc2c9;border-radius:1.5px"></div>
<svg class="abs" style="left:687.50px;top:279.97px" width="13" height="8" viewBox="0 0 13 8"><path d="M0 4 L3.5 0 H12.5 V8 H3.5 Z" fill="#fbbd12"/><path d="M1.7 2 L3.5 0 H12.5 V3.2 H1 Z" fill="#ffd04a"/></svg>
<div class="row" style="left:702.70px;top:279.17px">Average_Grade</div>
<div class="abs" style="left:832.00px;top:281.77px;width:10.5px;height:5.2px;background:#fff;border:1px solid #bcc2c9;border-radius:1.5px"></div>
<svg class="abs" style="left:687.50px;top:292.85px" width="13" height="8" viewBox="0 0 13 8"><path d="M0 4 L3.5 0 H12.5 V8 H3.5 Z" fill="#fbbd12"/><path d="M1.7 2 L3.5 0 H12.5 V3.2 H1 Z" fill="#ffd04a"/></svg>
<div class="row" style="left:702.70px;top:292.05px">Course</div>
<div class="abs" style="left:832.00px;top:294.65px;width:10.5px;height:5.2px;background:#fff;border:1px solid #bcc2c9;border-radius:1.5px"></div>
<svg class="abs" style="left:687.50px;top:305.72px" width="13" height="8" viewBox="0 0 13 8"><path d="M0 4 L3.5 0 H12.5 V8 H3.5 Z" fill="#fbbd12"/><path d="M1.7 2 L3.5 0 H12.5 V3.2 H1 Z" fill="#ffd04a"/></svg>
<div class="row" style="left:702.70px;top:304.92px">CrHr</div>
<div class="abs" style="left:832.00px;top:307.52px;width:10.5px;height:5.2px;background:#fff;border:1px solid #bcc2c9;border-radius:1.5px"></div>
<svg class="abs" style="left:687.50px;top:318.60px" width="13" height="8" viewBox="0 0 13 8"><path d="M0 4 L3.5 0 H12.5 V8 H3.5 Z" fill="#fbbd12"/><path d="M1.7 2 L3.5 0 H12.5 V3.2 H1 Z" fill="#ffd04a"/></svg>
<div class="row" style="left:702.70px;top:317.80px">Masters_Grade</div>
<div class="abs" style="left:832.00px;top:320.40px;width:10.5px;height:5.2px;background:#fff;border:1px solid #bcc2c9;border-radius:1.5px"></div>
<svg class="abs" style="left:687.50px;top:331.47px" width="13" height="8" viewBox="0 0 13 8"><path d="M0 4 L3.5 0 H12.5 V8 H3.5 Z" fill="#fbbd12"/><path d="M1.7 2 L3.5 0 H12.5 V3.2 H1 Z" fill="#ffd04a"/></svg>
<div class="row" style="left:702.70px;top:330.67px">Date</div>
<div class="abs" style="left:832.00px;top:333.27px;width:10.5px;height:5.2px;background:#fff;border:1px solid #bcc2c9;border-radius:1.5px"></div>
<svg class="abs" style="left:687.50px;top:344.35px" width="13" height="8" viewBox="0 0 13 8"><path d="M0 4 L3.5 0 H12.5 V8 H3.5 Z" fill="#fbbd12"/><path d="M1.7 2 L3.5 0 H12.5 V3.2 H1 Z" fill="#ffd04a"/></svg>
<div class="row" style="left:702.70px;top:343.55px">&lt;New Member&gt;</div>
<div class="abs" style="left:289px;top:436.5px;width:11px;height:11px;border-radius:2.5px;background:#2f7cc0;border:1px solid #eef3f8"></div>
<div class="t" style="left:292.3px;top:438.5px;font-size:8.5px;color:#e8f0f8">S</div>
<div class="abs" style="left:290px;top:456px;width:20px;height:20px;border-radius:50%;background:#fff"></div>
<svg class="abs" style="left:291px;top:457px" width="18" height="18" viewBox="0 0 18 18"><path d="M7 8 L10 5.5 L14 7.5 V12.5 L10 15 L7 13 Z" fill="#f5b223"/><path d="M7 8 L10 10 L14 7.5" fill="none" stroke="#e09010" stroke-width="0.6"/><path d="M3 3 Q8 1.5 11 6" fill="none" stroke="#2aa84a" stroke-width="1.5"/><path d="M9 6.5 L12.5 7 L12 3.5 Z" fill="#2aa84a"/></svg>
<div class="t" style="left:312.3px;top:461.0px;color:#fff;font-size:11px;font-weight:bold;letter-spacing:-0.08px">Variables</div>
<svg class="abs" style="left:427.6px;top:458.3px" width="15" height="15" viewBox="0 0 15 15"><circle cx="7.5" cy="7.5" r="7" fill="#8a6140"/><path d="M3 4 L7.5 12 L12 4 Z" fill="#fff"/></svg>
</body></html>
